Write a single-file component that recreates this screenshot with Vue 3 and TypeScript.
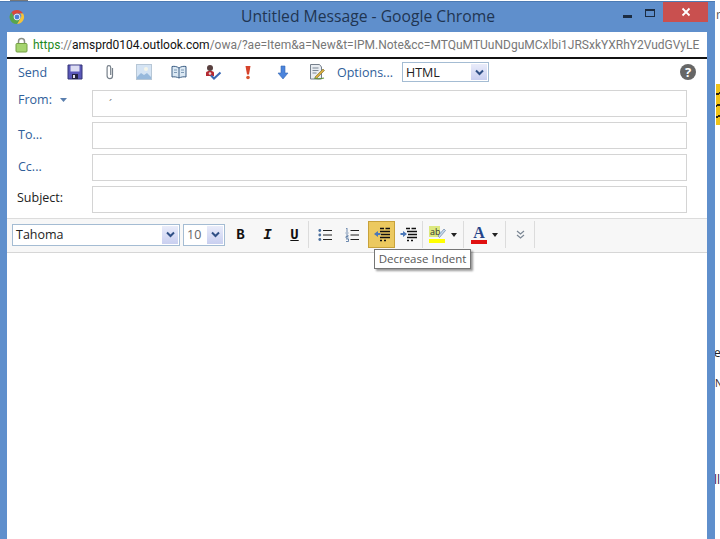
<script setup lang="ts">
const topIcons = ['save', 'clip', 'image', 'book', 'check', 'urgent', 'low', 'sign']
</script>

<template>
  <div class="desktop">
    <div class="backdrop">
      <span class="bg-dark"></span>
      <span class="bg-r">r</span>
      <span class="bg-stripe"></span>
      <span class="bg-e">e</span>
      <span class="bg-n">N</span>
      <span class="bg-l">ll</span>
    </div>
    <div class="window">
      <header class="titlebar">
        <svg class="chrome" width="16" height="16" viewBox="0 0 16 16">
          <path d="M8 1a7 7 0 0 1 6.100 3.500H8a3.600 3.600 0 0 0-3.400 2.300L2.400 3.300A7 7 0 0 1 8 1z" fill="#d8483a" />
          <path d="M14.100 4.500A7 7 0 0 1 8 15l3-5.300a3.600 3.600 0 0 0 .1-5.200z" fill="#f3c33b" />
          <path d="M8 15A7 7 0 0 1 2.400 3.300l3 5.300A3.600 3.600 0 0 0 11 9.700z" fill="#58a54c" />
          <circle cx="8" cy="8" r="2.900" fill="#4a7fd6" stroke="#e8eef7" stroke-width="1" />
        </svg>
        <div class="title">Untitled Message - Google Chrome</div>
        <div class="winbtn">
          <span class="min"></span>
          <span class="max"></span>
          <span class="close">
            <svg width="10" height="10" viewBox="0 0 10 10"><path d="M1.500 1.500l7 7M8.500 1.500l-7 7" stroke="#fff" stroke-width="1.800" /></svg>
          </span>
        </div>
      </header>
      <div class="addr">
        <svg class="lock" width="13" height="16" viewBox="0 0 13 16">
          <path d="M3.500 7V4.500a3 3 0 0 1 6 0V7" fill="none" stroke="#8b8f85" stroke-width="1.500" />
          <rect x="1" y="6.500" width="11" height="8.500" rx="1" fill="#a5d46f" stroke="#74a044" />
        </svg>
        <div class="url"><span class="https">https</span><span class="gray">://</span><span class="host">amsprd0104.outlook.com</span><span class="gray">/owa/?ae=Item&amp;a=New&amp;t=IPM.Note&amp;cc=MTQuMTUuNDguMCxlbi1JRSxkYXRhY2VudGVyLE</span></div>
      </div>
      <main class="page">
        <div class="actions">
          <span class="send">Send</span>
          <div class="icons">
            <span v-for="n in topIcons" :key="n" class="ico">
              <svg v-if="n === 'save'" width="16" height="16" viewBox="0 0 16 16">
                <path d="M1 1h14v14H1z" fill="#5a58b8" stroke="#343477" />
                <rect x="3.500" y="1.500" width="9" height="6" fill="#dcdcf2" />
                <rect x="5" y="10" width="6" height="5" fill="#23233f" />
                <rect x="6" y="11" width="2" height="3" fill="#dfe0ee" />
              </svg>
              <svg v-else-if="n === 'clip'" width="12" height="16" viewBox="0 0 12 16">
                <path d="M8.500 4v8a2.700 2.700 0 0 1-5.400 0V3.500a1.800 1.800 0 0 1 3.600 0V11" fill="none" stroke="#77808a" stroke-width="1.200" />
              </svg>
              <svg v-else-if="n === 'image'" width="16" height="16" viewBox="0 0 16 16">
                <rect x=".5" y=".5" width="15" height="15" fill="#d5e4f4" stroke="#b7c7d6" />
                <circle cx="10" cy="5" r="2" fill="#f5f5e8" />
                <path d="M1 13l4-4 3 2 3-2 4 4v2H1z" fill="#97b9dc" />
              </svg>
              <svg v-else-if="n === 'book'" width="16" height="14" viewBox="0 0 16 14">
                <path d="M8 3C6 1.500 3.500 1 1 1.500V12c2.500-.5 5 0 7 1 2-1 4.500-1.500 7-1V1.500C12.500 1 10 1.500 8 3z" fill="#dbe8f3" stroke="#3d5f85" />
                <path d="M8 3v10" stroke="#3d5f85" />
                <path d="M3 5h3M3 7.500h3M10 5h3M10 7.500h3" stroke="#7f9ab5" />
              </svg>
              <svg v-else-if="n === 'check'" width="17" height="16" viewBox="0 0 17 16">
                <circle cx="5" cy="4" r="3" fill="#59403f" />
                <path d="M1 12V9c0-1.500 1.500-2 4-2s4 .5 4 2v3z" fill="#b52a32" />
                <circle cx="5" cy="9.500" r="1.300" fill="#e7d8d8" />
                <path d="M6 11.500l3 3 6.500-6" fill="none" stroke="#3a69b4" stroke-width="2" />
              </svg>
              <svg v-else-if="n === 'urgent'" width="8" height="15" viewBox="0 0 8 15">
                <path d="M1.500 1h5L5 9.500H3z" fill="#d6432b" />
                <circle cx="4" cy="12.500" r="1.800" fill="#d8552f" />
              </svg>
              <svg v-else-if="n === 'low'" width="12" height="15" viewBox="0 0 12 15">
                <path d="M4 1h4v7h3l-5 6-5-6h3z" fill="#4b84dc" stroke="#3768b4" stroke-width=".6" />
              </svg>
              <svg v-else width="16" height="16" viewBox="0 0 16 16">
                <path d="M1.500 .5h9l2 2.500v12h-11z" fill="#e9edf2" stroke="#76808c" />
                <path d="M3.500 4h6M3.500 6.500h6M3.500 9h4" stroke="#7b8794" />
                <path d="M6 13l8-8 1.500 1.500-8 8z" fill="#d8ad3f" stroke="#7a6a2c" stroke-width=".6" />
                <path d="M5 14c2 1 7 1 10 0" stroke="#5f8f3a" stroke-width="1.200" fill="none" />
              </svg>
            </span>
          </div>
          <span class="options">Options...</span>
          <div class="sel html"><span>HTML</span><i class="arrow"><svg width="9" height="7" viewBox="0 0 9 7"><path d="M1 1.500l3.500 3.500L8 1.500" fill="none" stroke="#2f4f85" stroke-width="2" /></svg></i></div>
          <span class="help">?</span>
        </div>
        <div class="fields">
          <div class="row"><label class="link from">From:<svg width="7" height="4" viewBox="0 0 7 4"><path d="M0 0h7L3.500 4z" fill="#5a7fae" /></svg></label><div class="input"><span class="tick">´</span></div></div>
          <div class="row"><label class="link">To...</label><div class="input"></div></div>
          <div class="row"><label class="link">Cc...</label><div class="input"></div></div>
          <div class="row"><label class="subject">Subject:</label><div class="input"></div></div>
        </div>
        <div class="format">
          <div class="sel font"><span>Tahoma</span><i class="arrow"><svg width="9" height="7" viewBox="0 0 9 7"><path d="M1 1.500l3.500 3.500L8 1.500" fill="none" stroke="#2f4f85" stroke-width="2" /></svg></i></div>
          <div class="sel size"><span>10</span><i class="arrow"><svg width="9" height="7" viewBox="0 0 9 7"><path d="M1 1.500l3.500 3.500L8 1.500" fill="none" stroke="#2f4f85" stroke-width="2" /></svg></i></div>
          <span class="tb letter b">B</span>
          <span class="tb letter i">I</span>
          <span class="tb letter u">U</span>
          <span class="sep s1"></span>
          <span class="tb"><svg width="14" height="14" viewBox="0 0 14 14"><path d="M5 2.500h9M5 7h9M5 11.500h9" stroke="#222" stroke-width="1.200" /><circle cx="1.800" cy="2.500" r="1.400" fill="#4b6f9d" /><circle cx="1.800" cy="7" r="1.400" fill="#4b6f9d" /><circle cx="1.800" cy="11.500" r="1.400" fill="#4b6f9d" /></svg></span>
          <span class="tb"><svg width="14" height="14" viewBox="0 0 14 14"><path d="M5.500 2.500H14M5.500 7H14M5.500 11.500H14" stroke="#222" stroke-width="1.200" /><path d="M1 1l1-.5v4M.5 5.500h3M1 7.500h2v1.500H1v1.500h2.500M1 11.500h2.500v2.500H1" fill="none" stroke="#4b6f9d" stroke-width=".8" transform="translate(0 -.5)" /></svg></span>
          <span class="tb active"><svg width="18" height="15" viewBox="0 0 18 15"><path d="M7 1.500h4m1.500 0H17M7 4.500h10M8 7.500h9M7 10.500h10M7 13.500h2m2 0h2" stroke="#111" stroke-width="1.300" /><path d="M1 7l4-3v2h2.500v2H5v2z" fill="#4b78b8" /></svg></span>
          <span class="tb"><svg width="18" height="15" viewBox="0 0 18 15"><path d="M6 1.500h4m1.500 0H16M7 4.500h10M8 7.500h9M7 10.500h10M7 13.500h2m2 0h2" stroke="#111" stroke-width="1.300" /><path d="M7 7L3 4v2H.5v2H3v2z" fill="#4b78b8" /></svg></span>
          <span class="sep s2"></span>
          <span class="hl"><svg width="17" height="17" viewBox="0 0 17 17"><rect y="0" width="11" height="11" fill="#dce87e" /><text x="1" y="9" font-size="9" font-family="Open Sans" fill="#333">ab</text><path d="M9 10l6-7 1.500 1.500-6 7z" fill="#c7d9ec" stroke="#6d87a8" stroke-width=".7" /><rect y="13" width="16" height="4" fill="#ffff00" /></svg></span>
          <span class="caret c1"></span>
          <span class="sep s3"></span>
          <span class="fc"><span class="a">A</span><span class="red"></span></span>
          <span class="caret c2"></span>
          <span class="sep s4"></span>
          <span class="more"><svg width="9" height="9" viewBox="0 0 9 9"><path d="M1 1l3.500 3L8 1M1 5l3.500 3L8 5" fill="none" stroke="#7b8794" stroke-width="1.200" /></svg></span>
          <span class="sep s5"></span>
        </div>
        <div class="tooltip">Decrease Indent</div>
      </main>
    </div>
  </div>
</template>

<style>
html, body { margin: 0; padding: 0; background: #fff; }
</style>

<style scoped>
.desktop { position: relative; width: 720px; height: 539px; overflow: hidden; background: #fff; font-family: "Open Sans", "Noto Sans", sans-serif; }
.backdrop span { position: absolute; }
.bg-dark { left: 10px; top: 0; width: 18px; height: 1px; background: #777; }
.bg-r { left: 716px; top: 6px; font-size: 12px; color: #555; }
.bg-stripe { left: 716px; top: 84px; width: 4px; height: 41px; background: repeating-linear-gradient(165deg, #f0c418 0 9px, #2b2410 9px 11px); }
.bg-e { left: 714px; top: 344px; font-size: 12px; color: #222; }
.bg-n { left: 715px; top: 376px; font-size: 10px; color: #322; }
.bg-l { left: 714px; top: 471px; font-size: 12px; color: #414; }

.window { position: relative; box-sizing: border-box; width: 715px; height: 538px; margin-top: 1px; background: #5f8fcc; border-top: 1px solid #4d7bb4; display: flex; flex-direction: column; }
.titlebar { height: 30px; flex: none; display: flex; align-items: center; position: relative; }
.chrome { position: absolute; left: 9px; top: 7px; }
.title { width: 100%; box-sizing: border-box; padding: 0 0 2px 21px; text-align: center; font-size: 15.7px; color: #1f3552; }
.winbtn { position: absolute; left: 623px; top: 0; width: 85px; height: 20px; }
.winbtn span { position: absolute; display: block; box-sizing: border-box; }
.min { left: 0; top: 13px; width: 9px; height: 3px; background: #1c2c42; }
.max { left: 22px; top: 7px; width: 10px; height: 8px; border: 1px solid #1c2c42; border-top-width: 2px; }
.winbtn .close { left: 40px; top: 0; width: 45px; height: 20px; background: #c9504f; display: flex; align-items: center; justify-content: center; }

.addr { height: 25px; flex: none; margin: 0 8px 0 7px; background: #fff; display: flex; align-items: center; gap: 5px; padding-left: 8px; box-sizing: border-box; overflow: hidden; }
.lock { flex: none; }
.url { font-family: Roboto, "Open Sans", sans-serif; font-size: 12px; white-space: nowrap; color: #777; }
.https { color: #1d8a1d; }
.gray { color: #777; }
.host { color: #111; }

.page { flex: 1; position: relative; margin: 0 8px 0 7px; background: #fff; border-top: 2px solid #111; }

.actions { height: 31px; box-sizing: border-box; padding: 0 0 5px 11px; display: flex; align-items: center; }
.send { width: 40px; font-size: 12.5px; color: #30609a; }
.icons { display: flex; width: 278px; margin-left: 0; }
.ico { width: 34.600px; display: flex; justify-content: center; align-items: center; }
.options { width: 65px; margin-left: 1px; font-size: 12.5px; color: #30609a; }
.sel { box-sizing: border-box; display: flex; align-items: center; justify-content: space-between; border: 1px solid #a4bcd3; background: #fff; font-size: 12.5px; color: #222; padding: 0 1px 0 3px; }
.sel .arrow { width: 16px; height: calc(100% - 2px); background: linear-gradient(#e9ecfa, #c9cff0); display: flex; align-items: center; justify-content: center; }
.html { width: 87px; height: 20px; }
.help { margin-left: 191px; width: 16px; height: 16px; border-radius: 50%; background: #666; color: #fff; font-size: 13px; font-weight: 700; line-height: 16px; text-align: center; }

.fields { display: flex; flex-direction: column; gap: 5px; }
.row { display: flex; align-items: center; height: 27px; }
.row label { width: 85px; box-sizing: border-box; padding-left: 11px; font-size: 12.5px; display: flex; align-items: center; gap: 8px; position: relative; top: -1px; }
.row .from { top: -4px; }
.link { color: #30609a; }
.row .subject { color: #222; padding-left: 10px; top: -2px; }
.input { box-sizing: border-box; width: 595px; height: 27px; border: 1px solid #d4d4d4; background: #fff; }
.tick { margin-left: 16px; color: #777; font-size: 11px; line-height: 14px; }

.format { position: relative; margin-top: 5px; height: 35px; box-sizing: border-box; padding: 0 0 2px 5px; background: #f7f7f7; border-top: 1px solid #dcdcdc; border-bottom: 1px solid #d6d6d6; display: flex; align-items: center; }
.font { width: 168px; height: 22px; }
.size { width: 42px; height: 22px; margin-left: 3px; color: #666; }
.font span, .size span { padding-bottom: 1px; }
.tb { width: 27px; height: 27px; flex: none; box-sizing: border-box; display: flex; align-items: center; justify-content: center; }
.letter { font-family: "Liberation Mono", monospace; font-size: 14px; font-weight: 700; color: #111; }
.b { margin-left: 2px; }
.i { font-style: italic; }
.u { text-decoration: underline; }
.sep { width: 1px; height: 27px; background: #dcdcdc; flex: none; }
.s1 { margin-left: 0; margin-right: 2px; }
.active { background: #ecc95f; border: 1px solid #c8a23a; margin-left: 3px; }
.s2 { margin-left: 0; margin-right: 6px; }
.hl { display: flex; width: 17px; height: 17px; }
.caret { width: 0; height: 0; border: 3px solid transparent; border-top: 4px solid #222; border-bottom: 0; flex: none; }
.c1 { margin-left: 5px; margin-right: 6px; }
.s3 { margin-right: 7px; }
.fc { width: 16px; height: 18px; display: flex; flex-direction: column; align-items: center; }
.a { font-family: "Liberation Serif", serif; font-weight: 700; font-size: 16px; line-height: 14px; color: #26458a; }
.red { width: 16px; height: 4px; background: #e01010; margin-top: 0; }
.c2 { margin-left: 5px; margin-right: 7px; }
.more { width: 28px; display: flex; justify-content: center; }
.s5 { margin-left: 0; }

.tooltip { position: absolute; left: 367px; top: 190px; box-sizing: border-box; width: 97px; height: 20px; border: 1px solid #767676; background: #fff; font-size: 11.500px; line-height: 18px; color: #575757; text-align: center; white-space: nowrap; box-shadow: 2px 2px 2px rgba(0,0,0,.4); }
</style>
